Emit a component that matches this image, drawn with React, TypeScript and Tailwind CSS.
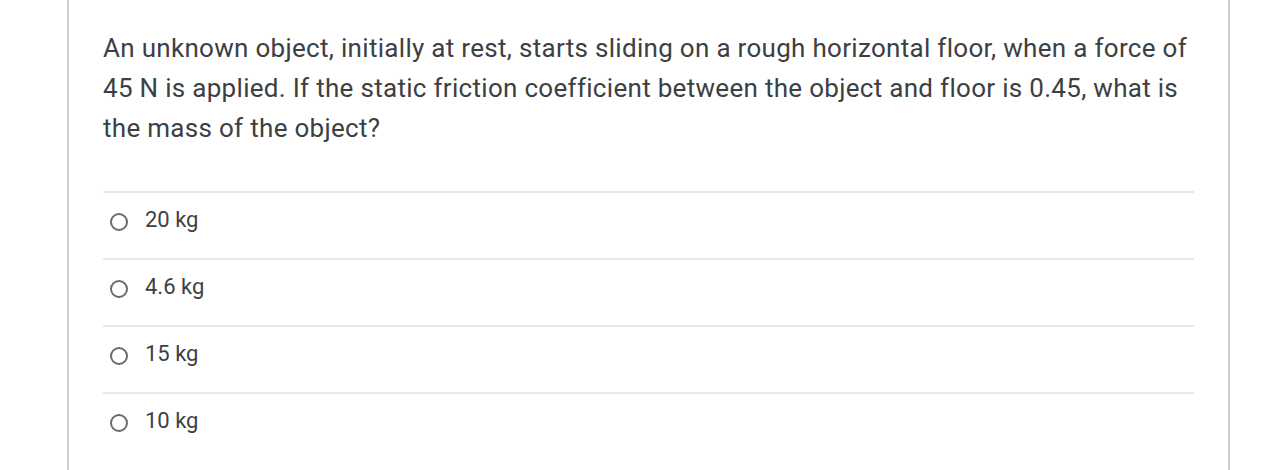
export default function App() {
  const options = ["20 kg", "4.6 kg", "15 kg", "10 kg"];

  return (
    <div className="min-h-[470px] bg-white overflow-hidden" style={{ fontFamily: "Roboto, 'Liberation Sans', sans-serif" }}>
      <div className="ml-[67px] w-[1163px] min-h-[470px] border-x-2 border-[#cfcfcf] px-[34px] pt-[28px]">
        <p className="whitespace-nowrap text-[26px] leading-[40px] tracking-[0.3px] text-[#3c4043]">
          An unknown object, initially at rest, starts sliding on a rough horizontal floor, when a force of
          <br />
          45 N is applied. If the static friction coefficient between the object and floor is 0.45, what is
          <br />
          the mass of the object?
        </p>
        <div className="mt-[43px]">
          {options.map((opt) => (
            <div key={opt} className="flex h-[67px] items-start gap-[17px] border-t-2 border-[#e8e8e8] pl-[7px] pt-[14px]">
              <span className="mt-[6px] block h-[18px] w-[18px] shrink-0 rounded-full border-2 border-[#6b6b6b]" />
              <span className="text-[22px] leading-[26px] text-[#3c4043]">{opt}</span>
            </div>
          ))}
        </div>
      </div>
    </div>
  );
}
